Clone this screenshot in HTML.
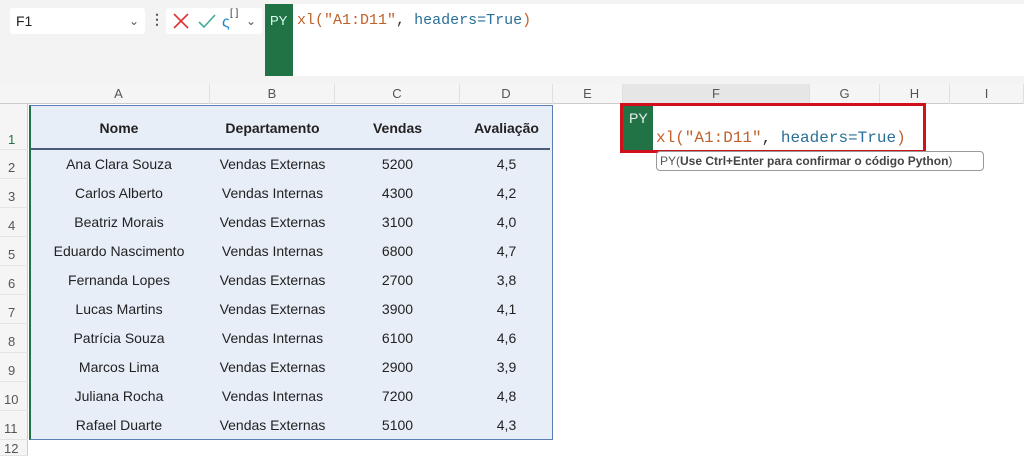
<!DOCTYPE html>
<html><head><meta charset="utf-8"><style>
*{margin:0;padding:0;box-sizing:border-box}
body{width:1024px;height:456px;overflow:hidden;background:#fff;font-family:"Liberation Sans",sans-serif;position:relative;font-size:14px;color:#222}
.a{position:absolute}
.mono{font-family:"Liberation Mono","DejaVu Sans Mono",monospace}
.ch{position:absolute;top:84px;height:20px;font-size:13px;color:#555;text-align:center;line-height:20px;border-right:1px solid #e0e0e0}
.rh{position:absolute;left:0;width:28px;font-size:13px;color:#555;padding-left:8px;border-bottom:1px solid #e4e4e4}
.c{position:absolute;text-align:center;font-size:14px;color:#222}
</style></head><body>
<div class="a" style="left:0;top:0;width:1024px;height:84px;background:#f3f3f3"></div>
<div class="a" style="left:10px;top:8px;width:135px;height:26px;background:#fff;border-radius:3px;font-size:14px;line-height:26px;padding-left:6px">F1<span style="position:absolute;right:6px;color:#555;font-size:12px">&#8964;</span></div>
<div class="a" style="left:150px;top:11px;color:#555;font-weight:bold">&#8942;</div>
<div class="a" style="left:166px;top:8px;width:96px;height:26px;background:#fff;border-radius:3px"></div>
<svg class="a" style="left:172px;top:12px" width="18" height="18"><path d="M2 2L16 16M16 2L2 16" stroke="#d33" stroke-width="1.6"/></svg>
<svg class="a" style="left:197px;top:12px" width="20" height="18"><path d="M2 10L7 15L18 3" stroke="#4a9" stroke-width="1.6" fill="none"/></svg>
<div class="a" style="left:222px;top:10px;color:#28c;font-size:16px;line-height:26px">&#962;</div>
<div class="a" style="left:230px;top:8px;color:#333;font-size:10px">[ ]</div>
<div class="a" style="left:246px;top:8px;color:#555;font-size:12px;line-height:26px">&#8964;</div>
<div class="a" style="left:265px;top:4px;width:759px;height:72px;background:#fff"></div>
<div class="a" style="left:265px;top:4px;width:28px;height:72px;background:#217346;color:#dfe;font-size:13px;padding:9px 0 0 5px">PY</div>
<div class="a mono" style="left:297px;top:12px;font-size:15px;color:#c0612b">xl(<span style="color:#c0612b">"A1:D11"</span><span style="color:#333">,</span> <span style="color:#2a6f97">headers=True</span>)</div>
<div class="a" style="left:0;top:84px;width:1024px;height:20px;background:#f5f5f5;border-bottom:1px solid #ccc"></div>
<div class="a" style="left:623px;top:84px;width:187px;height:20px;background:#e6e6e6"></div>
<div class="ch" style="left:28px;width:182px">A</div>
<div class="ch" style="left:210px;width:125px">B</div>
<div class="ch" style="left:335px;width:125px">C</div>
<div class="ch" style="left:460px;width:93px">D</div>
<div class="ch" style="left:553px;width:70px">E</div>
<div class="ch" style="left:623px;width:187px">F</div>
<div class="ch" style="left:810px;width:70px">G</div>
<div class="ch" style="left:880px;width:70px">H</div>
<div class="ch" style="left:950px;width:74px">I</div>
<div class="a" style="left:0;top:104px;width:28px;height:352px;background:#f5f5f5;border-right:1px solid #ccc"></div>
<div class="rh" style="top:104px;height:46px;padding-top:28px;color:#217346">1</div>
<div class="rh" style="top:150px;height:29px;padding-top:10px">2</div>
<div class="rh" style="top:179px;height:29px;padding-top:10px">3</div>
<div class="rh" style="top:208px;height:29px;padding-top:10px">4</div>
<div class="rh" style="top:237px;height:29px;padding-top:10px">5</div>
<div class="rh" style="top:266px;height:29px;padding-top:10px">6</div>
<div class="rh" style="top:295px;height:29px;padding-top:10px">7</div>
<div class="rh" style="top:324px;height:29px;padding-top:10px">8</div>
<div class="rh" style="top:353px;height:29px;padding-top:10px">9</div>
<div class="rh" style="top:382px;height:29px;padding-top:10px;padding-left:4px">10</div>
<div class="rh" style="top:411px;height:29px;padding-top:10px;padding-left:4px">11</div>
<div class="rh" style="top:440px;height:16px;padding-top:1px;padding-left:4px">12</div>
<div class="a" style="left:29px;top:105px;width:524px;height:335px;background:#e8eef8;border:1px solid #5a7fb5;border-left:2px solid #217346"></div>
<div class="a" style="left:31px;top:148px;width:519px;height:2px;background:#4a5d78"></div>
<div class="c" style="left:28px;width:182px;top:120px;font-weight:bold">Nome</div>
<div class="c" style="left:210px;width:125px;top:120px;font-weight:bold">Departamento</div>
<div class="c" style="left:335px;width:125px;top:120px;font-weight:bold">Vendas</div>
<div class="c" style="left:460px;width:93px;top:120px;font-weight:bold">Avaliação</div>
<div class="c" style="left:28px;width:182px;top:156px">
<div style="height:29px">Ana Clara Souza</div><div style="height:29px">Carlos Alberto</div><div style="height:29px">Beatriz Morais</div><div style="height:29px">Eduardo Nascimento</div><div style="height:29px">Fernanda Lopes</div><div style="height:29px">Lucas Martins</div><div style="height:29px">Patrícia Souza</div><div style="height:29px">Marcos Lima</div><div style="height:29px">Juliana Rocha</div><div style="height:29px">Rafael Duarte</div></div>
<div class="c" style="left:210px;width:125px;top:156px">
<div style="height:29px">Vendas Externas</div><div style="height:29px">Vendas Internas</div><div style="height:29px">Vendas Externas</div><div style="height:29px">Vendas Internas</div><div style="height:29px">Vendas Externas</div><div style="height:29px">Vendas Externas</div><div style="height:29px">Vendas Internas</div><div style="height:29px">Vendas Externas</div><div style="height:29px">Vendas Internas</div><div style="height:29px">Vendas Externas</div></div>
<div class="c" style="left:335px;width:125px;top:156px">
<div style="height:29px">5200</div><div style="height:29px">4300</div><div style="height:29px">3100</div><div style="height:29px">6800</div><div style="height:29px">2700</div><div style="height:29px">3900</div><div style="height:29px">6100</div><div style="height:29px">2900</div><div style="height:29px">7200</div><div style="height:29px">5100</div></div>
<div class="c" style="left:460px;width:93px;top:156px">
<div style="height:29px">4,5</div><div style="height:29px">4,2</div><div style="height:29px">4,0</div><div style="height:29px">4,7</div><div style="height:29px">3,8</div><div style="height:29px">4,1</div><div style="height:29px">4,6</div><div style="height:29px">3,9</div><div style="height:29px">4,8</div><div style="height:29px">4,3</div></div>
<div class="a" style="left:620px;top:103px;width:306px;height:50px;border:3px solid #d0101a;background:#fff"></div>
<div class="a" style="left:623px;top:106px;width:30px;height:44px;background:#217346;color:#eee;font-size:14px;padding:4px 0 0 6px">PY</div>
<div class="a mono" style="left:656px;top:129px;font-size:16px;color:#c0612b">xl("A1:D11"<span style="color:#333">,</span> <span style="color:#2a6f97">headers=True</span>)</div>
<div class="a" style="left:656px;top:151px;width:328px;height:20px;background:#fff;border:1px solid #999;border-radius:4px;font-size:12px;line-height:18px;padding-left:3px;color:#555">PY(<b style="color:#444">Use Ctrl+Enter para confirmar o código Python</b>)</div>
</body></html>
